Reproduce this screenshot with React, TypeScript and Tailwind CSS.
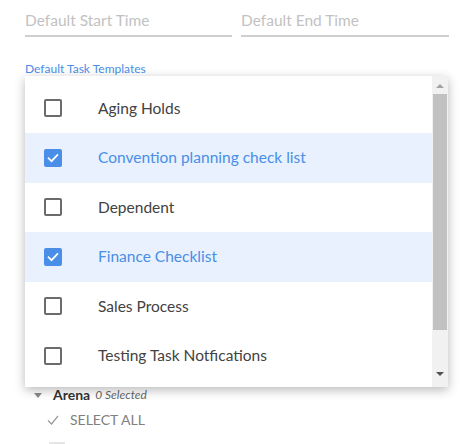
import { useState } from 'react';

const templates = [
  { name: 'Aging Holds', checked: false },
  { name: 'Convention planning check list', checked: true },
  { name: 'Dependent', checked: false },
  { name: 'Finance Checklist', checked: true },
  { name: 'Sales Process', checked: false },
  { name: 'Testing Task Notfications', checked: false },
];

function CheckBox({ checked }: { checked: boolean }) {
  if (checked) {
    return (
      <span className="flex h-[18px] w-[18px] items-center justify-center rounded-[2px] bg-[#4a8ee8]">
        <svg width="14" height="14" viewBox="0 0 24 24" fill="none">
          <path d="M4.5 12.5l5 5L19.5 7" stroke="white" strokeWidth="3" strokeLinecap="square" />
        </svg>
      </span>
    );
  }
  return <span className="h-[18px] w-[18px] rounded-[2px] border-2 border-[#6b6b6b]" />;
}

export default function App() {
  const [items, setItems] = useState(templates);

  const toggle = (i: number) =>
    setItems(items.map((it, j) => (j === i ? { ...it, checked: !it.checked } : it)));

  return (
    <div
      className="h-[444px] w-[474px] overflow-hidden bg-white pl-[25px] pr-[25px]"
      style={{ fontFamily: 'Lato, "Noto Sans", sans-serif' }}
    >
      {/* time inputs */}
      <div className="flex gap-[9px] pt-[10px]">
        <div className="w-[207px] border-b-2 border-[#cfcfcf] pb-[5px] text-[15.5px] leading-[20px] text-[#c2c2c2]">
          Default Start Time
        </div>
        <div className="w-[208px] border-b-2 border-[#cfcfcf] pb-[5px] text-[15.5px] leading-[20px] text-[#c2c2c2]">
          Default End Time
        </div>
      </div>

      <div className="mt-[25px] text-[12px] leading-[14px] text-[#4a8ee8]">Default Task Templates</div>

      {/* dropdown panel */}
      <div className="relative z-10 flex h-[311px] w-[423px] bg-white shadow-[0_3px_10px_rgba(0,0,0,0.28)]">
        <div className="flex-1 pt-[7.5px]">
          {items.map((it, i) => (
            <div
              key={it.name}
              onClick={() => toggle(i)}
              className={
                'flex h-[49.5px] cursor-pointer items-center gap-[36px] pl-[19px] text-[15.5px] ' +
                (it.checked ? 'bg-[#e8f1fd] text-[#4a8ee8]' : 'text-[#424242]')
              }
            >
              <CheckBox checked={it.checked} />
              <span>{it.name}</span>
            </div>
          ))}
        </div>
        {/* scrollbar */}
        <div className="flex w-[16px] flex-col bg-[#f1f1f1]">
          <div className="flex h-[18px] items-center justify-center pt-[2px]">
            <span className="h-0 w-0 border-x-[4px] border-b-[4px] border-x-transparent border-b-[#a3a3a3]" />
          </div>
          <div className="mx-[1px] h-[236px] bg-[#c1c1c1]" />
          <div className="flex-1" />
          <div className="flex h-[20px] items-start justify-center pt-[5px]">
            <span className="h-0 w-0 border-x-[4px] border-t-[4px] border-x-transparent border-t-[#505050]" />
          </div>
        </div>
      </div>

      {/* group below */}
      <div className="flex items-center pl-[9px] text-[14px] leading-[16px]">
        <span className="h-0 w-0 border-x-[4px] border-t-[5px] border-x-transparent border-t-[#8a8a8a]" />
        <span className="ml-[11px] font-bold text-[#333]">Arena</span>
        <span className="ml-[5px] text-[12px] italic text-[#666]">0 Selected</span>
      </div>
      <div className="mt-[9px] flex items-center pl-[22px] text-[14px] leading-[16px] text-[#808080]">
        <svg width="12" height="10" viewBox="0 0 12 10" fill="none">
          <path d="M1 5.5l3.5 3.5L11 1" stroke="#9a9a9a" strokeWidth="1.2" />
        </svg>
        <span className="ml-[11px]">SELECT ALL</span>
      </div>
      <div className="mt-[14px] ml-[24px] h-[3px] w-[16px] bg-[#e6e6e6]" />
    </div>
  );
}
